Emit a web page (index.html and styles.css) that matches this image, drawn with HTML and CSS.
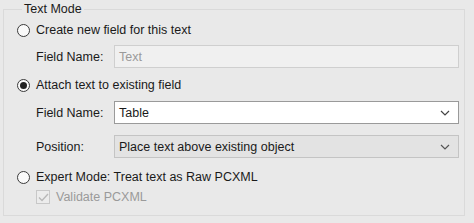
FILE: index.html
```html
<!DOCTYPE html>
<html>
<head>
	<title>Text Mode</title>
	<link rel="stylesheet" href="styles.css">
</head>
<body>
	<fieldset class="group">
		<legend>Text Mode</legend>
		<div class="opt">
			<span class="radio"></span>
			<span>Create new field for this text</span>
		</div>
		<div class="row first">
			<span class="lbl">Field Name:</span>
			<div class="box disabled"><span class="gray">Text</span></div>
		</div>
		<div class="opt second">
			<span class="radio on"></span>
			<span>Attach text to existing field</span>
		</div>
		<div class="row name">
			<span class="lbl">Field Name:</span>
			<div class="box combo white"><span>Table</span>
				<svg class="chev" width="10" height="6" viewBox="0 0 10 6"><path d="M1 1 L5 5 L9 1" fill="none" stroke="#444" stroke-width="1.2"/></svg>
			</div>
		</div>
		<div class="row">
			<span class="lbl">Position:</span>
			<div class="box combo grey"><span>Place text above existing object</span>
				<svg class="chev" width="10" height="6" viewBox="0 0 10 6"><path d="M1 1 L5 5 L9 1" fill="none" stroke="#555" stroke-width="1.2"/></svg>
			</div>
		</div>
		<div class="opt third">
			<span class="radio"></span>
			<span>Expert Mode: Treat text as Raw PCXML</span>
		</div>
		<div class="check">
			<span class="cbox">
				<svg width="11" height="9" viewBox="0 0 11 9"><path d="M1 4.5 L4 7.5 L10 1" fill="none" stroke="#b8b8b8" stroke-width="1.4"/></svg>
			</span>
			<span class="gray">Validate PCXML</span>
		</div>
	</fieldset>
</body>
</html>
```

FILE: styles.css
```css
html, body{
	margin: 0;
	background: #e9e9e9;
}
body{
	font-family: "Liberation Sans", Arial, sans-serif;
	font-size: 12.5px;
	color: #1a1a1a;
	padding: 2px 0 0 3px;
}
.group{
	width: 462px;
	height: 214px;
	box-sizing: border-box;
	margin: 0;
	padding: 0 0 0 14px;
	border: 1px solid #dadada;
}
.group legend{
	padding: 0 2px;
	margin-left: 4px;
	line-height: 14px;
}
.opt{
	display: flex;
	align-items: center;
	height: 16px;
	margin-top: 6px;
}
.opt.second{ margin-top: 9px; }
.opt.third{ margin-top: 11px; }
.radio{
	width: 13px;
	height: 13px;
	border: 1px solid #3a3a3a;
	border-radius: 50%;
	background: #fafafa;
	margin-right: 6px;
	margin-left: -1px;
	box-sizing: border-box;
	display: flex;
	align-items: center;
	justify-content: center;
}
.radio.on::after{
	content: "";
	width: 7px;
	height: 7px;
	border-radius: 50%;
	background: #222;
}
.row{
	display: flex;
	align-items: center;
	margin-top: 11px;
	padding-left: 18px;
}
.row.first{ margin-top: 7px; }
.row.name{ margin-top: 8px; }
.lbl{
	width: 78px;
}
.box{
	box-sizing: border-box;
	width: 345px;
	height: 23px;
	display: flex;
	align-items: center;
	padding-left: 4px;
	border: 1px solid #c8c8c8;
}
.box.disabled{
	background: #f0f0f0;
	border-color: #cfcfcf;
}
.box.white{
	background: #fff;
	border-color: #9a9a9a;
}
.box.grey{
	background: #e3e3e3;
	border-color: #c4c4c4;
}
.combo span{ flex: 1; }
.chev{ margin-right: 8px; }
.gray{ color: #9a9a9a; }
.check{
	display: flex;
	align-items: center;
	margin-top: 5px;
	padding-left: 18px;
}
.cbox{
	width: 14px;
	height: 14px;
	border: 1px solid #c8c8c8;
	background: #ececec;
	box-sizing: border-box;
	display: flex;
	align-items: center;
	justify-content: center;
	margin-right: 6px;
}
```
